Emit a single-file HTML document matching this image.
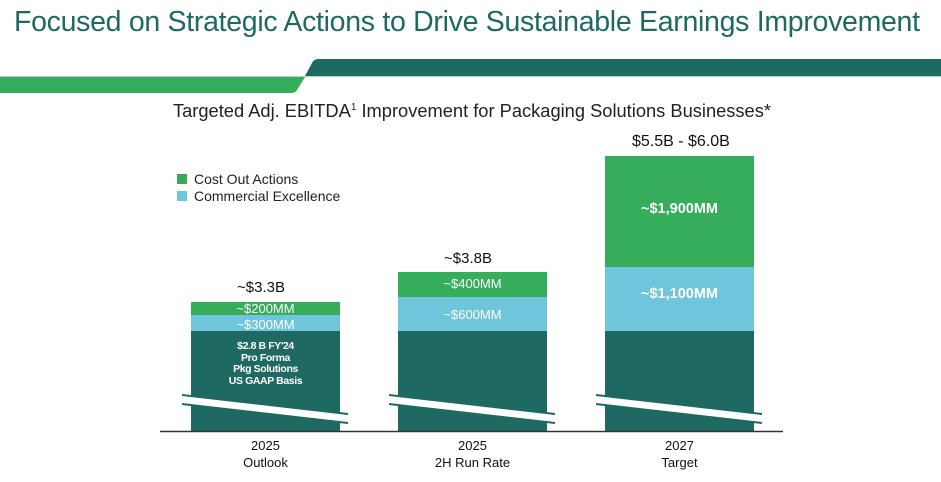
<!DOCTYPE html>
<html><head><meta charset="utf-8"><style>
body{margin:0;width:941px;height:482px;background:#fff;font-family:"Liberation Sans",sans-serif;position:relative;overflow:hidden}
.t{position:absolute;white-space:nowrap}
.c{position:absolute;text-align:center;color:#fff}
</style></head><body>
<div class="t" style="left:14px;top:6px;font-size:28.5px;color:#1e6a62;letter-spacing:-0.3px">Focused on Strategic Actions to Drive Sustainable Earnings Improvement</div>
<svg style="position:absolute;left:0;top:0" width="941" height="482">
<path d="M318,59 L941,59 L941,76 L305,76 L312,63 Q314,59 318,59Z" fill="#1e6a62"/>
<path d="M0,77 L305,77 L297,90 Q295,93 291,93 L0,93Z" fill="#35ad5a"/>
<line x1="0" y1="76.5" x2="941" y2="76.5" stroke="#a8d8c8" stroke-width="1"/>
<rect x="191" y="302" width="149" height="13" fill="#35ad5a"/>
<rect x="191" y="315" width="149" height="16" fill="#6fc6dc"/>
<rect x="191" y="331" width="149" height="101" fill="#1e6a62"/>
<rect x="398" y="272" width="149" height="25" fill="#35ad5a"/>
<rect x="398" y="297" width="149" height="34" fill="#6fc6dc"/>
<rect x="398" y="331" width="149" height="101" fill="#1e6a62"/>
<rect x="605" y="156" width="149" height="111" fill="#35ad5a"/>
<rect x="605" y="267" width="149" height="64" fill="#6fc6dc"/>
<rect x="605" y="331" width="149" height="101" fill="#1e6a62"/>
<g id="b">
<polygon points="182,395 348,414 348,423 182,404" fill="#fff"/>
<line x1="182" y1="395" x2="348" y2="414" stroke="#1e6a62" stroke-width="2"/>
<line x1="182" y1="404" x2="348" y2="423" stroke="#1e6a62" stroke-width="2"/>
</g>
<use href="#b" x="207"/>
<use href="#b" x="414"/>
<line x1="160" y1="431.5" x2="783" y2="431.5" stroke="#333" stroke-width="1.5"/>
</svg>
<div class="t" style="left:173px;top:100px;font-size:18.3px;color:#222">Targeted Adj. EBITDA<sup style="font-size:10px">1</sup> Improvement for Packaging Solutions Businesses*</div>
<div style="position:absolute;left:177px;top:174px;width:10px;height:10px;background:#35ad5a"></div>
<div style="position:absolute;left:177px;top:191px;width:10px;height:10px;background:#6fc6dc"></div>
<div class="t" style="left:194px;top:171px;font-size:14px;color:#222">Cost Out Actions</div>
<div class="t" style="left:194px;top:188px;font-size:14px;color:#222">Commercial Excellence</div>
<div class="t" style="left:237px;top:279px;font-size:15px;color:#111">~$3.3B</div>
<div class="t" style="left:444px;top:250px;font-size:15px;color:#111">~$3.8B</div>
<div class="t" style="left:632px;top:133px;font-size:16px;color:#111">$5.5B - $6.0B</div>
<div class="c" style="left:191px;width:149px;top:301px;font-size:13px;line-height:15px">~$200MM</div>
<div class="c" style="left:191px;width:149px;top:317px;font-size:13px;line-height:15px">~$300MM</div>
<div class="c" style="left:191px;width:149px;top:341px;font-size:10.5px;line-height:11.5px;font-weight:bold;letter-spacing:-0.4px">$2.8 B FY'24<br>Pro Forma<br>Pkg Solutions<br>US GAAP Basis</div>
<div class="c" style="left:398px;width:149px;top:276px;font-size:13px;line-height:15px">~$400MM</div>
<div class="c" style="left:398px;width:149px;top:307px;font-size:13px;line-height:15px">~$600MM</div>
<div class="c" style="left:605px;width:149px;top:201px;font-size:14.5px;font-weight:bold">~$1,900MM</div>
<div class="c" style="left:605px;width:149px;top:286px;font-size:14.5px;font-weight:bold">~$1,100MM</div>
<div class="c" style="left:191px;width:149px;top:437px;font-size:13px;line-height:17px;color:#111">2025<br>Outlook</div>
<div class="c" style="left:398px;width:149px;top:437px;font-size:13px;line-height:17px;color:#111">2025<br>2H Run Rate</div>
<div class="c" style="left:605px;width:149px;top:437px;font-size:13px;line-height:17px;color:#111">2027<br>Target</div>
</body></html>
